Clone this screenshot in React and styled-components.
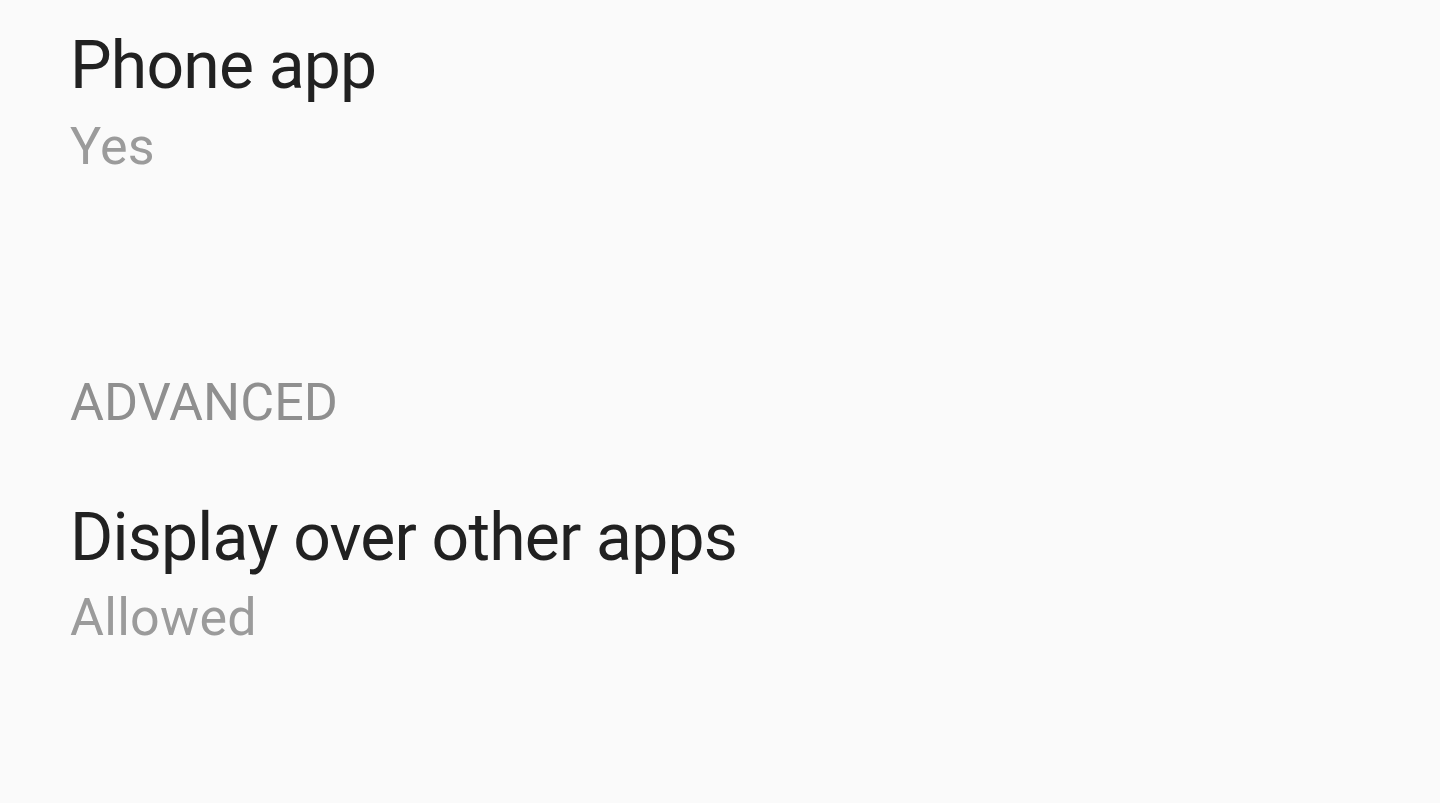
import React from "react";
import styled, { createGlobalStyle } from "styled-components";

const GlobalStyle = createGlobalStyle`
  html, body {
    margin: 0;
    padding: 0;
    background: #fafafa;
  }

  body {
    font-family: Roboto, "Noto Sans", sans-serif;
    -webkit-font-smoothing: antialiased;
  }
`;

const Screen = styled.div`
  width: 1440px;
  height: 803px;
  overflow: hidden;
  background: #fafafa;
  display: flex;
  flex-direction: column;
`;

const Item = styled.div`
  display: flex;
  flex-direction: column;
  gap: ${(props) => props.gap || 11}px;
  padding: ${(props) => props.top || 0}px 70px 0;
`;

const Title = styled.div`
  font-size: 66px;
  line-height: 78px;
  color: #212121;
  letter-spacing: -0.8px;
`;

const Summary = styled.div`
  font-size: 52px;
  line-height: 62px;
  color: #9b9b9b;
  letter-spacing: 0.3px;
`;

const SectionHeader = styled.div`
  padding: 194px 70px 0;
  font-size: 52px;
  line-height: 62px;
  color: #8f8f8f;
  text-transform: uppercase;
  letter-spacing: 0.1px;
`;

const App = () => {
  return (
    <Screen>
      <GlobalStyle />
      <Item top={27}>
        <Title>Phone app</Title>
        <Summary>Yes</Summary>
      </Item>

      <SectionHeader>Advanced</SectionHeader>

      <Item top={65} gap={10}>
        <Title>Display over other apps</Title>
        <Summary>Allowed</Summary>
      </Item>
    </Screen>
  );
};

export default App;
